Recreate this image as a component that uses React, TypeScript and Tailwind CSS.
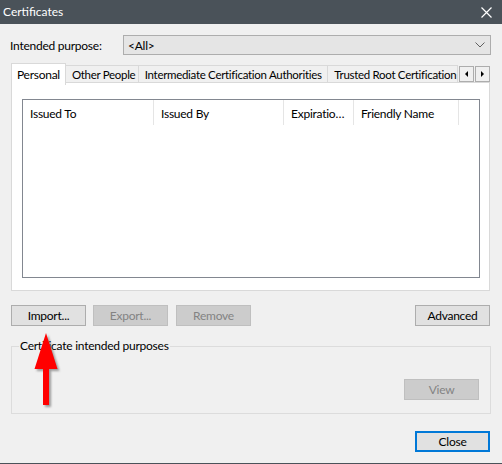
import React from 'react';

const font = { fontFamily: 'Lato, "Noto Sans", sans-serif' };

type BtnProps = { label: string; disabled?: boolean; focused?: boolean; className?: string };

const Btn: React.FC<BtnProps> = ({ label, disabled, focused, className = '' }) => {
  const look = disabled
    ? 'bg-[#cccccc] border border-[#bfbfbf] text-[#838383]'
    : focused
    ? 'bg-[#e1e1e1] border-2 border-[#0078d7] text-black'
    : 'bg-[#e1e1e1] border border-[#adadad] text-black';
  return (
    <div className={`w-[75px] h-[21px] flex items-center justify-center pt-[1px] leading-none ${look} ${className}`}>
      {label}
    </div>
  );
};

const tabs = ['Other People', 'Intermediate Certification Authorities', 'Trusted Root Certification Authorities'];
const tabWidths = ['w-[73px]', 'w-[190px]', 'w-[130px]'];

const columns = [
  { name: 'Issued To', w: 'w-[131px]' },
  { name: 'Issued By', w: 'w-[130px]' },
  { name: 'Expiratio…', w: 'w-[70px]' },
  { name: 'Friendly Name', w: 'w-[105px]' },
];

export default function App() {
  return (
    <div className="relative w-[502px] h-[464px] bg-[#f0f0f0] flex flex-col border-b border-[#4a5259] select-none text-black" style={font}>
      {/* Title bar */}
      <div className="h-[24px] bg-[#4a5259] flex items-center justify-between pl-[3px] pr-[10px] shrink-0">
        <span className="text-white text-[12px]">Certificates</span>
        <svg width="11" height="11" viewBox="0 0 11 11">
          <path d="M0.5 0.5 L10.5 10.5 M10.5 0.5 L0.5 10.5" stroke="#ffffff" strokeWidth="1.2" />
        </svg>
      </div>

      <div className="flex-1 flex flex-col pl-[11px] pr-[11px] text-[12px] tracking-[-0.25px]">
        {/* Intended purpose */}
        <div className="mt-[11px] h-[20px] flex items-center">
          <span className="w-[113px] -ml-[1px] pt-[1px]">Intended purpose:</span>
          <div className="flex-1 h-[20px] bg-[#e5e5e5] border border-[#adadad] flex items-center justify-between pl-[4px] pr-[5px]">
            <span className="pt-[1px]">&lt;All&gt;</span>
            <svg width="10" height="6" viewBox="0 0 10 6">
              <path d="M0.5 0.5 L5 5 L9.5 0.5" stroke="#606060" strokeWidth="1" fill="none" />
            </svg>
          </div>
        </div>

        {/* Tabs */}
        <div className="mt-[8px] h-[19px] flex items-end relative z-10 mr-[1px]">
          <div className="w-[55px] h-[22px] -mb-[3px] bg-white border border-b-0 border-[#d9d9d9] flex items-start justify-center pt-[2px]">
            Personal
          </div>
          {tabs.map((t, i) => (
            <div key={t} className={`${tabWidths[i]} h-[17px] bg-[#f0f0f0] border border-l-0 border-b-0 border-[#d9d9d9] overflow-hidden whitespace-nowrap pl-[6px] leading-[17px] text-[11.5px] tracking-[-0.3px]`}>
              {t}
            </div>
          ))}
          <div className="flex h-[16px] ml-auto">
            {['M4 1 L1 4 L4 7 Z', 'M1 1 L4 4 L1 7 Z'].map((d, i) => (
              <div key={i} className="w-[15px] h-[16px] border border-[#adadad] bg-[#f0f0f0] flex items-center justify-center ml-[1px]">
                <svg width="5" height="8" viewBox="0 0 5 8">
                  <path d={d} fill="#000" />
                </svg>
              </div>
            ))}
          </div>
        </div>

        {/* Tab panel */}
        <div className="h-[209px] bg-white border border-[#d9d9d9] mr-[1px] pl-[10px] pr-[9px] pt-[16px]">
          <div className="h-[179px] border border-[#828790] bg-white">
            <div className="h-[25px] flex">
              {columns.map((c) => (
                <div key={c.name} className={`${c.w} h-full border-r border-[#e5e5e5] flex items-center pl-[7px] pt-[2px] whitespace-nowrap`}>
                  {c.name}
                </div>
              ))}
            </div>
          </div>
        </div>

        {/* Buttons */}
        <div className="mt-[14px] flex items-center">
          <Btn label="Import..." />
          <Btn label="Export..." disabled className="ml-[7px]" />
          <Btn label="Remove" disabled className="ml-[8px]" />
          <Btn label="Advanced" className="ml-auto mr-[1px] w-[74px]" />
        </div>

        {/* Group box */}
        <fieldset className="mt-[12px] h-[76px] border border-[#dcdcdc] px-0 m-0 relative">
          <legend className="ml-[7px] px-[1px] leading-[16px]">Certificate intended purposes</legend>
          <div className="flex justify-end pr-[11px] mt-[25px]">
            <Btn label="View" disabled />
          </div>
        </fieldset>

        {/* Close */}
        <div className="mt-[17px] flex justify-end">
          <Btn label="Close" focused className="mr-[1px]" />
        </div>
      </div>

      {/* Red arrow annotation */}
      <svg className="absolute left-[32px] top-[331px]" width="32" height="80" viewBox="0 0 32 80">
        <defs>
          <filter id="sh" x="-30%" y="-30%" width="160%" height="160%">
            <feGaussianBlur stdDeviation="1.2" />
          </filter>
        </defs>
        <path d="M16 4 L27.5 40 L19 40 L19 76 L13 76 L13 40 L4.5 40 Z" fill="#555" opacity="0.55" filter="url(#sh)" />
        <path d="M14 2 L25.5 38 L17 38 L17 74 L11 74 L11 38 L2.5 38 Z" fill="#ff0000" />
      </svg>
    </div>
  );
}
